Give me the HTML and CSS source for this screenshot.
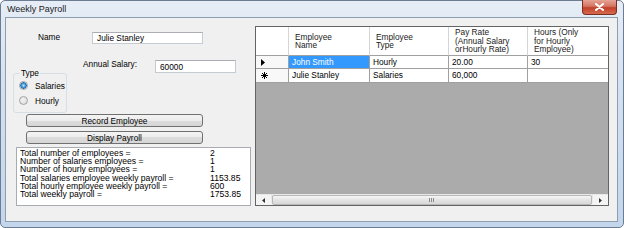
FILE: index.html
```html
<!DOCTYPE html>
<html lang="en">
  <head>
    <title>Weekly Payroll</title>
    <link rel="stylesheet" href="styles.css">
  </head>
  <body>
    <div class="window">
      <div class="titleBar">
        <span class="title">Weekly Payroll</span>
        <span class="closeButton">
          <svg width="11" height="8" viewBox="0 0 11 8">
            <path d="M2 1 L9 7 M9 1 L2 7" stroke="#ffffff" stroke-width="2" stroke-linecap="round"/>
          </svg>
        </span>
      </div>
      <div class="client">
        <div class="leftPanel">
          <div class="fieldRow nameRow">
            <label class="fieldLabel nameLabel">Name</label>
            <div class="textbox nameBox">Julie Stanley</div>
          </div>
          <div class="fieldRow salaryRow">
            <label class="fieldLabel salaryLabel">Annual Salary:</label>
            <div class="textbox salaryBox">60000</div>
          </div>
          <fieldset class="typeGroup">
            <legend>Type</legend>
            <div class="radioRow"><span class="radio checked"></span>Salaries</div>
            <div class="radioRow"><span class="radio"></span>Hourly</div>
          </fieldset>
          <button class="winButton recordButton">Record Employee</button>
          <button class="winButton displayButton">Display Payroll</button>
          <div class="outputBox">
            <span>Total number of employees =</span><span>2</span>
            <span>Number of salaries employees =</span><span>1</span>
            <span>Number of hourly employees =</span><span>1</span>
            <span>Total salaries employee weekly payroll =</span><span>1153.85</span>
            <span>Total hourly employee weekly payroll =</span><span>600</span>
            <span>Total weekly payroll =</span><span>1753.85</span>
          </div>
        </div>

        <div class="dataGrid">
          <div class="gridCells">
            <div class="cell head corner"></div>
            <div class="cell head">Employee<br>Name</div>
            <div class="cell head">Employee<br>Type</div>
            <div class="cell head">Pay Rate<br>(Annual Salary<br>orHourly Rate)</div>
            <div class="cell head last">Hours (Only<br>for Hourly<br>Employee)</div>

            <div class="cell rowHead">
              <svg width="4" height="7" viewBox="0 0 4 7"><path d="M0 0 L4 3.5 L0 7 Z" fill="#000"/></svg>
            </div>
            <div class="cell selected">John Smith</div>
            <div class="cell">Hourly</div>
            <div class="cell">20.00</div>
            <div class="cell last">30</div>

            <div class="cell rowHead">
              <svg width="7" height="7" viewBox="0 0 7 7">
                <path d="M3.5 0 V7 M0 3.5 H7 M1 1 L6 6 M6 1 L1 6" stroke="#000" stroke-width="1"/>
              </svg>
            </div>
            <div class="cell">Julie Stanley</div>
            <div class="cell">Salaries</div>
            <div class="cell">60,000</div>
            <div class="cell last"></div>
          </div>
          <div class="gridEmpty"></div>
          <div class="hScroll">
            <span class="scrollArrow">
              <svg width="3" height="5" viewBox="0 0 3 5"><path d="M3 0 L0 2.5 L3 5 Z" fill="#333"/></svg>
            </span>
            <span class="scrollThumb">
              <svg width="6" height="4" viewBox="0 0 6 4"><path d="M0.5 0 V4 M2.5 0 V4 M4.5 0 V4" stroke="#8a8a8a" stroke-width="1"/></svg>
            </span>
            <span class="scrollArrow">
              <svg width="3" height="5" viewBox="0 0 3 5"><path d="M0 0 L3 2.5 L0 5 Z" fill="#333"/></svg>
            </span>
          </div>
        </div>
      </div>
    </div>
  </body>
</html>
```

FILE: styles.css
```css
html, body {
  margin: 0;
  background-color: #ffffff;
}
body {
  font-family: 'Liberation Sans', Arial, sans-serif;
  font-size: 8.3px;
  color: #000000;
}
.window {
  box-sizing: border-box;
  width: 624px;
  height: 228px;
  border: 1px solid #6c7d92;
  border-radius: 5px;
  background: linear-gradient(#e6edf6, #d3e0f0 40%, #c4d6ec);
  padding: 0 5px 5px 4px;
  display: flex;
  flex-direction: column;
}
.titleBar {
  height: 16px;
  display: flex;
  justify-content: space-between;
  align-items: flex-start;
}
.title {
  font-size: 9px;
  color: #1a1a1a;
  padding: 3px 0 0 2px;
}
.closeButton {
  box-sizing: border-box;
  width: 35px;
  height: 15px;
  margin-right: 1px;
  margin-top: -1px;
  border: 1px solid #7c2d22;
  border-top: none;
  border-radius: 0 0 4px 4px;
  background: linear-gradient(#e6a395, #d37562 45%, #c1402a 55%, #d66b4f);
  display: flex;
  align-items: center;
  justify-content: center;
}
.client {
  flex: 1;
  border: 1px solid #8f9db0;
  background-color: #f0f0f0;
  display: flex;
}
.leftPanel {
  width: 249px;
  display: flex;
  flex-direction: column;
}
.fieldRow {
  display: flex;
  align-items: flex-start;
}
.nameRow {
  margin-top: 14px;
}
.nameLabel {
  margin: 1px 0 0 32px;
  width: 54px;
}
.salaryRow {
  margin-top: 16px;
}
.salaryLabel {
  margin-left: 77px;
  width: 72px;
}
.fieldLabel {
  line-height: 9px;
}
.textbox {
  box-sizing: border-box;
  background-color: #ffffff;
  border: 1px solid #c5cbd3;
  border-top-color: #abadb3;
  padding-left: 4px;
  display: flex;
  align-items: center;
}
.nameBox {
  width: 111px;
  height: 12px;
}
.salaryBox {
  width: 81px;
  height: 13px;
}
.typeGroup {
  margin: -4px 0 0 7px;
  width: 54px;
  box-sizing: border-box;
  padding: 0 0 4px 0;
  border: 1px solid #d5dfe5;
  border-radius: 3px;
}
.typeGroup legend {
  padding: 0 1px;
  margin-left: 6px;
  line-height: 9px;
}
.radioRow {
  height: 15px;
  display: flex;
  align-items: center;
}
.radio {
  box-sizing: border-box;
  width: 9px;
  height: 9px;
  margin: 0 7px 0 5px;
  border-radius: 50%;
  border: 1px solid #a4a4a4;
  background: radial-gradient(circle at 40% 40%, #f4f4f4, #d6d6d6);
}
.radio.checked {
  background: radial-gradient(circle, #bfe4fb 0, #3d97d8 2px, #1f6fb8 3px, #e6e6e6 3.5px);
}
.winButton {
  box-sizing: border-box;
  width: 177px;
  height: 13px;
  margin-left: 20px;
  padding: 0;
  font-family: inherit;
  font-size: 8.3px;
  color: #000000;
  border: 1px solid #707070;
  border-radius: 3px;
  background: linear-gradient(#f4f4f4, #ececec 50%, #dcdcdc 50%, #d6d6d6);
}
.recordButton {
  margin-top: 1px;
}
.displayButton {
  margin-top: 4px;
}
.outputBox {
  box-sizing: border-box;
  margin: 3px 0 0 10px;
  width: 235px;
  height: 59px;
  background-color: #ffffff;
  border: 1px solid #a8acb2;
  padding: 1px 0 0 3px;
  display: grid;
  grid-template-columns: 190px auto;
  grid-auto-rows: 8.2px;
  font-size: 8.6px;
  line-height: 8.2px;
  align-content: start;
}
.dataGrid {
  box-sizing: border-box;
  width: 354px;
  height: 180px;
  margin-top: 8px;
  border: 1px solid #646464;
  display: flex;
  flex-direction: column;
}
.gridCells {
  display: grid;
  grid-template-columns: 33px 81px 79px 79px 80px;
  grid-template-rows: 29px 13px 14px;
  background-color: #ffffff;
}
.cell {
  box-sizing: border-box;
  border-right: 1px solid #a0a0a0;
  border-bottom: 1px solid #a0a0a0;
  padding-left: 3px;
  line-height: 12px;
  white-space: nowrap;
  overflow: hidden;
}
.cell.last {
  border-right: none;
}
.cell.head {
  border-right-color: #d5d5d5;
  border-bottom-color: #a0a0a0;
  padding-left: 6px;
  line-height: 8.4px;
  display: flex;
  align-items: center;
  color: #1a1a1a;
}
.cell.rowHead {
  background-color: #f8f8f8;
  display: flex;
  align-items: center;
  padding-left: 5px;
}
.cell.selected {
  background-color: #3399ff;
  color: #ffffff;
}
.gridEmpty {
  flex: 1;
  background-color: #ababab;
}
.hScroll {
  height: 10px;
  display: flex;
  background: linear-gradient(#e3e3e3, #f0f0f0);
  border-top: 1px solid #e8e8e8;
}
.scrollArrow {
  width: 15px;
  display: flex;
  align-items: center;
  justify-content: center;
  background-color: #f4f4f4;
}
.scrollThumb {
  flex: 1;
  box-sizing: border-box;
  margin: 0 1px;
  border: 1px solid #b8b8b8;
  border-radius: 2px;
  background: linear-gradient(#f6f6f6, #e4e4e4 50%, #d8d8d8);
  display: flex;
  align-items: center;
  justify-content: center;
}
```
